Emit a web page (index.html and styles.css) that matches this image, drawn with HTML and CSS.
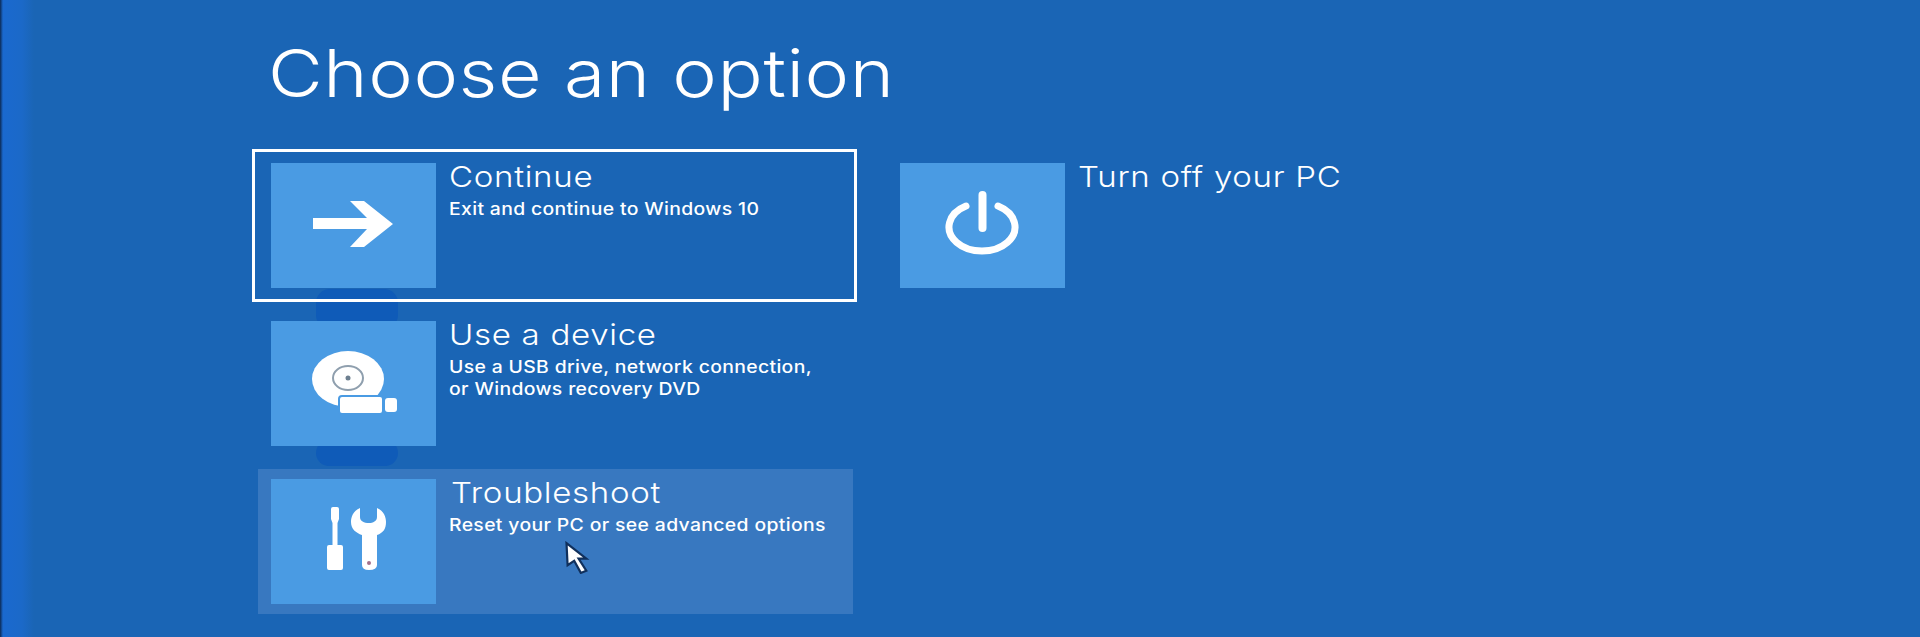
FILE: index.html
```html
<!DOCTYPE html>
<html lang="en">
<head>
    <meta charset="UTF-8">
    <title>Choose an option</title>
    <link rel="stylesheet" href="styles.css">
</head>
<body>

<div class="smudge smudge-top"></div>
<div class="smudge smudge-bottom"></div>

<div class="container">
    <h1>Choose an option</h1>
    <div class="columns">
        <div class="column">
            <div class="option focused">
                <div class="tile">
                    <svg viewBox="0 0 165 125">
                        <path fill="#fff" d="M42 55H96L79 38H93L122 61L93 84H79L96 66H42Z"/>
                    </svg>
                </div>
                <div class="option-text">
                    <h2>Continue</h2>
                    <p>Exit and continue to Windows 10</p>
                </div>
            </div>
            <div class="option">
                <div class="tile">
                    <svg viewBox="0 0 165 125">
                        <ellipse cx="77" cy="58" rx="36" ry="28" fill="#fff"/>
                        <ellipse cx="77" cy="57" rx="15" ry="12" fill="none" stroke="#8f9fae" stroke-width="2"/>
                        <circle cx="77" cy="57" r="2.5" fill="#6d7f90"/>
                        <rect x="68" y="75" width="44" height="18" rx="3" fill="#fff" stroke="#4a9be3" stroke-width="2"/>
                        <rect x="114" y="77" width="12" height="14" rx="3" fill="#fff"/>
                    </svg>
                </div>
                <div class="option-text">
                    <h2>Use a device</h2>
                    <p>Use a USB drive, network connection,<br>or Windows recovery DVD</p>
                </div>
            </div>
            <div class="option hovered">
                <div class="tile">
                    <svg viewBox="0 0 165 125">
                        <path fill="#fff" d="M60 30Q60 28 62 28H66Q68 28 68 30V40L66.500 44V66H70Q72 66 72 68V89Q72 91 70 91H58Q56 91 56 89V68Q56 66 58 66H61.500V44L60 40Z"/>
                        <path fill="#fff" d="M89 29C82 32 80 38 80 43C80 50 85 54 91 56V86Q91 91 98 91Q106 91 106 86V56C112 54 115 50 115 43C115 38 113 32 106 29V38C106 42 102 44 98 44C93 44 89 42 89 38Z"/>
                        <circle cx="98" cy="84" r="2" fill="#a5708c"/>
                    </svg>
                </div>
                <div class="option-text">
                    <h2 class="nudge">Troubleshoot</h2>
                    <p>Reset your PC or see advanced options</p>
                </div>
            </div>
        </div>
        <div class="column">
            <div class="option">
                <div class="tile">
                    <svg viewBox="0 0 165 125">
                        <path fill="none" stroke="#fff" stroke-width="7" stroke-linecap="round" d="M66 43A33 24 0 1 0 98 43"/>
                        <path fill="none" stroke="#fff" stroke-width="8" stroke-linecap="round" d="M82.500 32V65"/>
                    </svg>
                </div>
                <div class="option-text">
                    <h2>Turn off your PC</h2>
                </div>
            </div>
        </div>
    </div>
</div>

<!-- mouse pointer -->
<svg class="pointer" viewBox="0 0 24 30">
    <path fill="#fff" stroke="#10305c" stroke-width="2" d="M2 2L20 16H13L20 27L15 29L9 18L3 22Z"/>
</svg>

</body>
</html>
```

FILE: styles.css
```css
html, body {
    height: 100%;
}

body {
    font-family: Inter, "Open Sans", Arial, sans-serif;
    color: #fff;
    background-color: #1a65b5;
    background-image: linear-gradient(to right, #0c2a55 0, #1a69cf 3px, #1b69c8 22px, #1a65b5 34px);
    margin: 0;
    padding: 0;
    overflow: hidden;
}

.container {
    position: relative;
    padding: 28px 0 0 258px;
}

/* the capture is stretched sideways, so the text is too */
h1, h2, p {
    width: fit-content;
    white-space: nowrap;
    transform: scaleX(1.14);
    transform-origin: left center;
}

h1 {
    font-size: 66px;
    font-weight: 300;
    line-height: 90px;
    letter-spacing: 0.5px;
    margin: 0 0 35px 10px;
}

.columns {
    display: flex;
    gap: 34px;
}

.column {
    display: flex;
    flex-direction: column;
    gap: 13px;
    width: 595px;
}

.option {
    position: relative;
    display: flex;
    gap: 13px;
    height: 145px;
    padding: 10px 0 0 13px;
    box-sizing: border-box;
}

.focused::after {
    content: "";
    position: absolute;
    inset: -4px -4px -4px -6px;
    border: 3px solid #fff;
}

.hovered {
    background-color: #3878c0;
}

.tile {
    width: 165px;
    height: 125px;
    flex-shrink: 0;
    background-color: #4a9be3;
}

.tile svg {
    display: block;
    width: 100%;
    height: 100%;
}

h2 {
    font-size: 29px;
    font-weight: 300;
    line-height: 34px;
    letter-spacing: 0.6px;
    margin: -3px 0 4px 0;
}

.nudge {
    margin-left: 2px;
}

p {
    font-size: 17px;
    font-weight: 500;
    line-height: 22px;
    letter-spacing: 0.3px;
    margin: 0;
}

.smudge {
    position: absolute;
    left: 316px;
    width: 82px;
    background-color: #0f5bb8;
    border-radius: 14px;
}

.smudge-top {
    top: 289px;
    height: 40px;
}

.smudge-bottom {
    top: 440px;
    height: 26px;
}

.pointer {
    position: absolute;
    left: 564px;
    top: 541px;
    width: 27px;
    height: 33px;
}
```
